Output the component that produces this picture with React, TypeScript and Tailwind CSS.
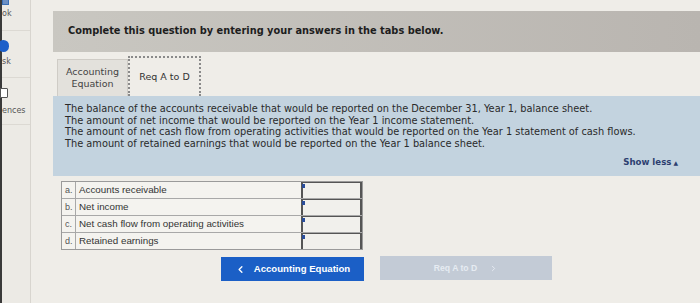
import { ChevronLeft, ChevronRight } from "lucide-react"

const rows = [
  { letter: "a.", label: "Accounts receivable" },
  { letter: "b.", label: "Net income" },
  { letter: "c.", label: "Net cash flow from operating activities" },
  { letter: "d.", label: "Retained earnings" },
]

const lines = [
  "The balance of the accounts receivable that would be reported on the December 31, Year 1, balance sheet.",
  "The amount of net income that would be reported on the Year 1 income statement.",
  "The amount of net cash flow from operating activities that would be reported on the Year 1 statement of cash flows.",
  "The amount of retained earnings that would be reported on the Year 1 balance sheet.",
]

function Sidebar() {
  return (
    <div className="w-[31px] shrink-0 h-[303px] flex border-r border-[#d8d5cf] bg-[#eceae5]">
      <div className="w-[2px] bg-[#3a3a3a]" />
      <div className="flex-1 flex flex-col text-[8px] text-[#555] font-['DejaVu_Sans',sans-serif]">
        <div className="h-[31px] border-b border-[#dcd9d3] relative">
          <div className="absolute left-0 top-0 w-[7px] h-[5px] border border-[#3b6fb5] border-t-0 bg-[#6b8fc4]" />
          <span className="absolute left-0 top-[10px] leading-none">ok</span>
        </div>
        <div className="h-[47px] border-b border-[#dcd9d3] relative">
          <div className="absolute left-[-4px] top-[9px] w-[11px] h-[12px] rounded-full bg-[#1d5fc9]" />
          <span className="absolute left-0 top-[27px] leading-none">sk</span>
        </div>
        <div className="h-[47px] border-b border-[#dcd9d3] relative">
          <div className="absolute left-[-2px] top-[10px] w-[8px] h-[10px] border border-[#555] rounded-[1px] bg-white" />
          <span className="absolute left-0 top-[29px] leading-none">ences</span>
        </div>
      </div>
    </div>
  )
}

export default function App() {
  return (
    <div className="w-[700px] h-[303px] overflow-hidden flex bg-[#efede8] font-['DejaVu_Sans',sans-serif]">
      <Sidebar />
      <div className="flex-1 pl-[22px] pt-[11px]">
        <div className="h-[41px] flex items-center pl-[15px] bg-gradient-to-r from-[#c9c7c1] to-[#b9b5b0]">
          <span className="text-[9.8px] font-bold text-[#1d1d1d]">
            Complete this question by entering your answers in the tabs below.
          </span>
        </div>

        <div className="flex items-end pl-[4px] mt-[4px] h-[40px]">
          <div className="w-[71px] h-[37px] flex items-center justify-center text-center text-[9.5px] leading-[12px] text-[#444] bg-[#e3e1dc] border border-[#cfccc6] border-b-0">
            Accounting
            <br />
            Equation
          </div>
          <div className="w-[73px] h-[40px] flex items-center justify-center text-[9.5px] text-[#333] bg-[#efede8] border-2 border-dotted border-[#8a8a8a] border-b-0">
            Req A to D
          </div>
        </div>

        <div className="h-[80px] bg-[#c3d3df] pl-[12px] pt-[7px] relative">
          {lines.map((l) => (
            <div key={l} className="text-[9.8px] leading-[11.7px] text-[#2a2a2a]">
              {l}
            </div>
          ))}
          <div className="absolute right-[22px] top-[60px] text-[8.6px] font-bold text-[#2d3f70] flex items-center gap-[2px]">
            Show less <span className="text-[6px]">▲</span>
          </div>
        </div>

        <div className="ml-[8px] mt-[5px] w-[302px] border border-[#9a9a9a] font-['Liberation_Sans',sans-serif]">
          {rows.map((r, i) => (
            <div key={r.letter} className={`flex ${i < 3 ? "h-[17px] border-b border-[#a8a8a8]" : "h-[16px]"}`}>
              <div className="w-[14px] pl-[3px] text-[9px] leading-[16px] text-[#555] border-r border-[#a8a8a8] bg-[#f4f3ef]">
                {r.letter}
              </div>
              <div className="w-[225px] pl-[3px] text-[9.8px] leading-[16px] text-[#333] bg-[#f4f3ef]">
                {r.label}
              </div>
              <div className="flex-1 relative bg-[#f1f0ec] border-x-2 border-t border-[#555]">
                <div className="absolute left-[-1px] top-[1px] w-[3px] h-[4px] bg-[#2a4d9a]" />
              </div>
            </div>
          ))}
        </div>

        <div className="flex mt-[7px] pl-[168px] gap-[16px] font-['Liberation_Sans',sans-serif]">
          <div className="w-[143px] h-[24px] bg-[#1b5fc6] text-white text-[9.6px] font-bold flex items-center justify-center gap-[8px]">
            <ChevronLeft size={11} strokeWidth={3} />
            Accounting Equation
          </div>
          <div className="w-[172px] h-[24px] -mt-[1px] bg-[#c3cbd6] text-[#e6ebf2] text-[8.6px] font-bold flex items-center justify-center gap-[12px]">
            Req A to D
            <ChevronRight size={9} strokeWidth={2.5} />
          </div>
        </div>
      </div>
    </div>
  )
}
